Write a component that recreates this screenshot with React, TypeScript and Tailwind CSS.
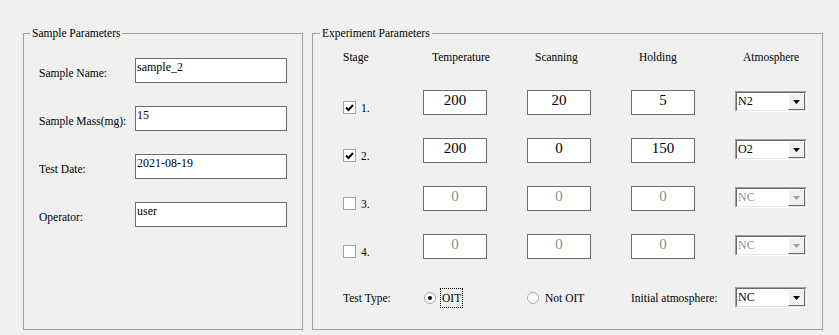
import React from 'react';

const font = "font-['Liberation_Serif','Times_New_Roman',serif]";

function TextBox({ value, w = 'w-[152px]' }: { value: string; w?: string }) {
  return (
    <div className={`${w} h-[25px] border border-[#6d6d6d] bg-white pl-px pt-px text-[12px] leading-[14px] text-black`}>
      {value}
    </div>
  );
}

function NumBox({ value, disabled }: { value: string; disabled?: boolean }) {
  return (
    <div
      className={`w-[64px] h-[25px] border border-[#6d6d6d] bg-white text-center pt-px text-[15px] leading-[17px] ${
        disabled ? 'text-[#8a8a8a]' : 'text-black'
      }`}
    >
      {value}
    </div>
  );
}

function Combo({ value, disabled }: { value: string; disabled?: boolean }) {
  return (
    <div className="w-[72px] h-[21px] border border-t-[#a0a0a0] border-l-[#a0a0a0] border-b-white border-r-white">
      <div className="h-full flex border border-t-[#696969] border-l-[#696969] border-b-[#e3e3e3] border-r-[#e3e3e3] bg-white">
        <div className={`flex-1 pl-px text-[12px] leading-[17px] ${disabled ? 'text-[#8d8d8d]' : 'text-black'}`}>
          {value}
        </div>
        <div className="w-[17px] h-full flex items-center justify-center bg-[#f0f0f0] border border-t-white border-l-white border-b-[#6a6a6a] border-r-[#6a6a6a]">
          <svg width="7" height="4" viewBox="0 0 7 4">
            <path d="M0 0h7L3.5 4z" fill={disabled ? '#a0a0a0' : '#000'} />
          </svg>
        </div>
      </div>
    </div>
  );
}

function Check({ checked }: { checked: boolean }) {
  return (
    <div className="w-[13px] h-[13px] border border-[#a3a3a3] bg-white flex items-center justify-center">
      {checked && (
        <svg width="9" height="8" viewBox="0 0 9 8">
          <path d="M1 3.5l2.5 2.5L8 1" stroke="#000" strokeWidth="2" fill="none" />
        </svg>
      )}
    </div>
  );
}

function Radio({ checked }: { checked: boolean }) {
  return (
    <div className="w-[12px] h-[12px] rounded-full border border-[#a8a8a8] bg-white flex items-center justify-center">
      {checked && <div className="w-[4px] h-[4px] rounded-full bg-black" />}
    </div>
  );
}

const stages = [
  { n: '1.', on: true, t: '200', s: '20', h: '5', a: 'N2' },
  { n: '2.', on: true, t: '200', s: '0', h: '150', a: 'O2' },
  { n: '3.', on: false, t: '0', s: '0', h: '0', a: 'NC' },
  { n: '4.', on: false, t: '0', s: '0', h: '0', a: 'NC' },
];

const sampleFields = [
  { label: 'Sample Name:', value: 'sample_2' },
  { label: 'Sample Mass(mg):', value: '15' },
  { label: 'Test Date:', value: '2021-08-19' },
  { label: 'Operator:', value: 'user' },
];

export default function App() {
  return (
    <div className={`w-[839px] h-[335px] bg-[#f0f0f0] flex pt-[26px] text-black ${font}`}>
      {/* Sample Parameters */}
      <fieldset className="ml-[23px] w-[280px] h-[304px] border border-[#a0a0a0]">
        <legend className="ml-[6px] px-[2px] text-[11.5px] leading-[14px]">Sample Parameters</legend>
        <div className="mt-[18px] pl-[15px] flex flex-col gap-[23px]">
          {sampleFields.map((f) => (
            <div key={f.label} className="flex items-center h-[25px]">
              <span className="w-[96px] pt-[5px] text-[11.5px] leading-[14px]">{f.label}</span>
              <TextBox value={f.value} />
            </div>
          ))}
        </div>
      </fieldset>

      {/* Experiment Parameters */}
      <fieldset className="ml-[9px] w-[511px] h-[304px] border border-[#a0a0a0]">
        <legend className="ml-[7px] px-[2px] text-[11.5px] leading-[14px]">Experiment Parameters</legend>
        <div className="mt-[10px] pl-[30px]">
          <div className="grid grid-cols-[80px_104px_104px_104px_72px] h-[14px] text-[11.5px] leading-[14px]">
            <span>Stage</span>
            <span className="pl-[9px]">Temperature</span>
            <span className="pl-[8px]">Scanning</span>
            <span className="pl-[8px]">Holding</span>
            <span className="pl-[8px]">Atmosphere</span>
          </div>

          <div className="mt-[26px] flex flex-col gap-[23px]">
            {stages.map((s) => (
              <div key={s.n} className="grid grid-cols-[80px_104px_104px_104px_72px] h-[25px]">
                <div className="flex items-center gap-[5px] pt-[10px] text-[11.5px] leading-[14px]">
                  <Check checked={s.on} />
                  <span>{s.n}</span>
                </div>
                <NumBox value={s.t} disabled={!s.on} />
                <NumBox value={s.s} disabled={!s.on} />
                <NumBox value={s.h} disabled={!s.on} />
                <div className="pt-px">
                  <Combo value={s.a} disabled={!s.on} />
                </div>
              </div>
            ))}
          </div>

          <div className="mt-[28px] grid grid-cols-[80px_104px_104px_104px_72px] h-[21px] items-center text-[11.5px] leading-[14px]">
            <span>Test Type:</span>
            <div className="flex items-center pl-px">
              <Radio checked />
              <span className="ml-[4px] px-[1px] py-[3px] border border-dotted border-black leading-[12px]">OIT</span>
            </div>
            <div className="flex items-center">
              <Radio checked={false} />
              <span className="ml-[6px]">Not OIT</span>
            </div>
            <span className="whitespace-nowrap">Initial atmosphere:</span>
            <Combo value="NC" />
          </div>
        </div>
      </fieldset>
    </div>
  );
}
